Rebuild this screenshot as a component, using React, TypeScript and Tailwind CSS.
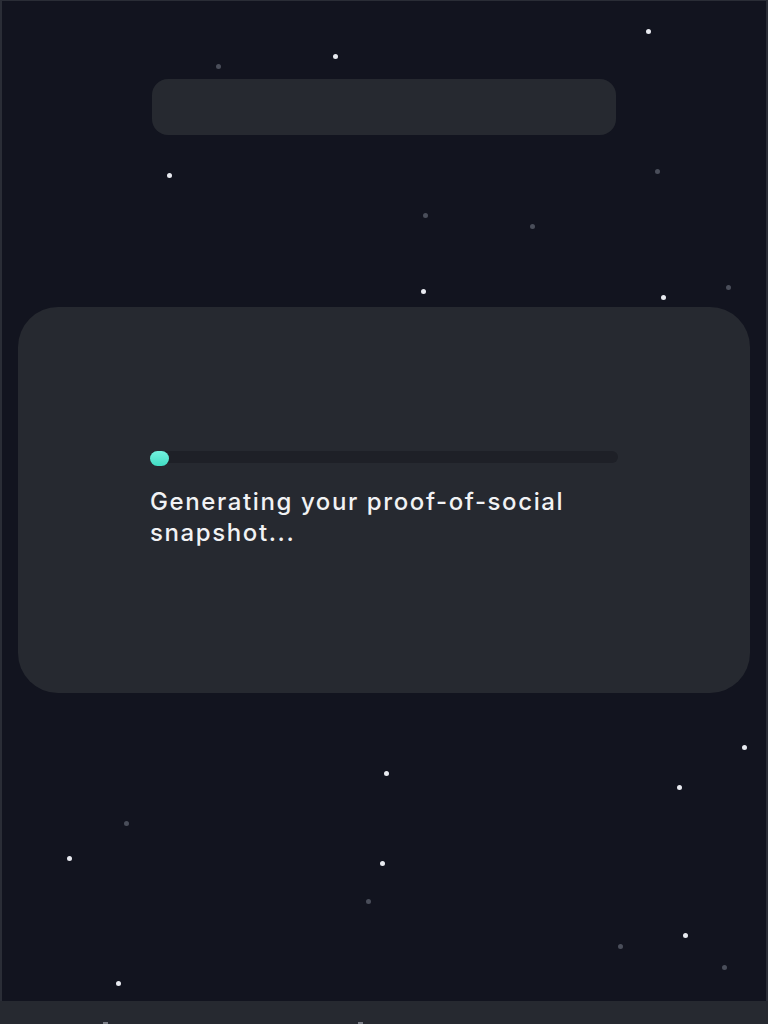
import React from "react";

const stars: { x: number; y: number; b: boolean }[] = [
  { x: 648, y: 31, b: true },
  { x: 335, y: 56, b: true },
  { x: 218, y: 66, b: false },
  { x: 169, y: 175, b: true },
  { x: 657, y: 171, b: false },
  { x: 425, y: 215, b: false },
  { x: 532, y: 226, b: false },
  { x: 423, y: 291, b: true },
  { x: 663, y: 297, b: true },
  { x: 728, y: 287, b: false },
  { x: 744, y: 747, b: true },
  { x: 386, y: 773, b: true },
  { x: 679, y: 787, b: true },
  { x: 126, y: 823, b: false },
  { x: 69, y: 858, b: true },
  { x: 382, y: 863, b: true },
  { x: 368, y: 901, b: false },
  { x: 620, y: 946, b: false },
  { x: 685, y: 935, b: true },
  { x: 724, y: 967, b: false },
  { x: 118, y: 983, b: true },
];

export default function App() {
  return (
    <div
      className="flex h-[1024px] w-[768px] flex-col bg-[#262930]"
      style={{ fontFamily: 'Inter, "Liberation Sans", Arial, sans-serif' }}
    >
      <div className="relative flex h-[1001px] flex-col border-x-2 border-t-[1px] border-[#2a2d36] bg-[#12141f]">
        {stars.map((s, i) => (
          <span
            key={i}
            className={`absolute h-[5px] w-[5px] rounded-full ${s.b ? "bg-[#e8eaf0]" : "bg-[#4a4e5a]"}`}
            style={{ left: s.x - 4.5, top: s.y - 3.5 }}
          />
        ))}
        <div className="relative mx-auto mt-[78px] h-[56px] w-[464px] rounded-2xl bg-[#262930]" />
        <div className="relative mx-4 mt-[172px] flex h-[386px] items-center justify-center rounded-[40px] bg-[#262930]">
          <div className="w-[468px]">
            <div className="h-[12px] w-full rounded-full bg-[#1e2027]">
              <div className="-mt-[1.5px] h-[15px] w-[19px] rounded-full bg-gradient-to-b from-[#72f2df] to-[#3fdcc3]" />
            </div>
            <p className="mt-[23px] text-[24px] leading-[31px] font-medium tracking-[1.6px] text-[#f1f2f4]">
              Generating your proof-of-social snapshot...
            </p>
          </div>
        </div>
      </div>
      <div className="relative flex-1 bg-[#262930]">
        <span className="absolute bottom-0 left-[103px] h-[2px] w-[5px] bg-[#7a7d86]" />
        <span className="absolute bottom-0 left-[358px] h-[2px] w-[5px] bg-[#7a7d86]" />
      </div>
    </div>
  );
}
